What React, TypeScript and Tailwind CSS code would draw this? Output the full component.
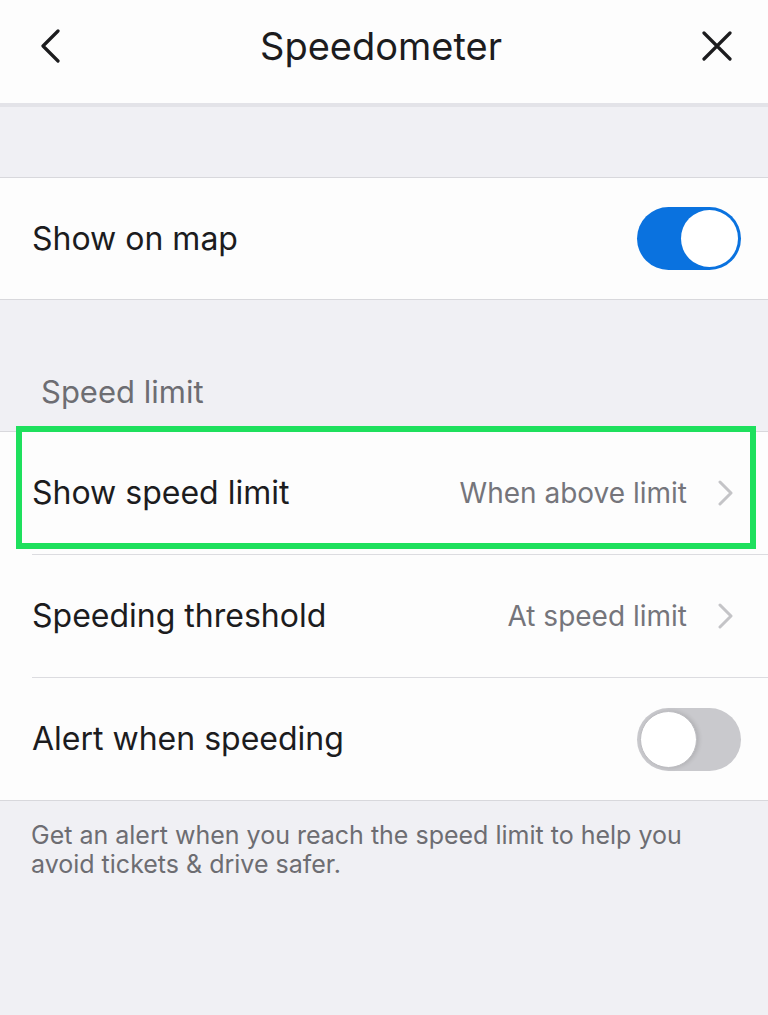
type Row = {
  label: string;
  value?: string;
  toggle?: boolean;
  highlighted?: boolean;
};

function BackIcon() {
  return (
    <svg width="20" height="34" viewBox="0 0 20 34" fill="none" className="text-[#1c1c1e]">
      <path d="M18 2 L3 17 L18 32" stroke="currentColor" strokeWidth="3.2" strokeLinecap="round" strokeLinejoin="round" />
    </svg>
  );
}

function CloseIcon() {
  return (
    <svg width="30" height="30" viewBox="0 0 30 30" fill="none" className="text-[#1c1c1e]">
      <path d="M2 2 L28 28 M28 2 L2 28" stroke="currentColor" strokeWidth="3.2" strokeLinecap="round" />
    </svg>
  );
}

function Chevron() {
  return (
    <svg width="16" height="26" viewBox="0 0 16 26" fill="none" className="text-[#c4c4c7]">
      <path d="M2 2 L13 13 L2 24" stroke="currentColor" strokeWidth="3" strokeLinecap="round" strokeLinejoin="round" />
    </svg>
  );
}

function Toggle({ on }: { on: boolean }) {
  return (
    <div
      className={
        on
          ? 'flex h-[63px] w-[104px] items-center justify-end rounded-full bg-[#0a72df] p-[3px]'
          : 'flex h-[63px] w-[104px] items-center justify-start rounded-full bg-[#c9c9cd] p-[3px]'
      }
    >
      <div
        className={
          on
            ? 'h-[57px] w-[57px] rounded-full bg-white'
            : 'h-[57px] w-[57px] rounded-full border border-[#bdbdc1] bg-white shadow-[2px_0_4px_rgba(0,0,0,0.12)]'
        }
      />
    </div>
  );
}

function SettingRow({ row, divider }: { row: Row; divider: boolean }) {
  return (
    <div className="relative bg-[#fdfdfd]">
      <div className="flex h-[122px] items-center pl-8 pr-[27px]">
        <span className="flex-1 text-[32px] text-[#1c1c1e]">{row.label}</span>
        {row.value && (
          <>
            <span className="mr-[31px] text-[28px] text-[#75757b]">{row.value}</span>
            <div className="mr-[7px]">
              <Chevron />
            </div>
          </>
        )}
        {row.toggle !== undefined && <Toggle on={row.toggle} />}
      </div>
      {divider && <div className="ml-8 h-px bg-[#dcdce0]" />}
      {row.highlighted && (
        <div className="pointer-events-none absolute left-4 top-[-6px] h-[123px] w-[740px] border-[6px] border-[#1ee05d]" />
      )}
    </div>
  );
}

export default function App() {
  const speedRows: Row[] = [
    { label: 'Show speed limit', value: 'When above limit', highlighted: true },
    { label: 'Speeding threshold', value: 'At speed limit' },
    { label: 'Alert when speeding', toggle: false },
  ];

  return (
    <div
      className="min-h-[1015px] bg-[#f0f0f4]"
      style={{ fontFamily: 'Inter, "Noto Sans", sans-serif' }}
    >
      <header className="flex h-[107px] items-center justify-between border-b-4 border-[#e3e3e8] bg-[#fdfdfd] pb-[11px] pl-[40px] pr-[36px]">
        <BackIcon />
        <h1 className="text-[38px] text-[#1c1c1e]">Speedometer</h1>
        <CloseIcon />
      </header>

      <div className="h-[70px]" />

      <section className="border-y border-[#d8d8dc] bg-[#fdfdfd]">
        <div className="flex h-[121px] items-center pl-8 pr-[27px]">
          <span className="flex-1 text-[32px] text-[#1c1c1e]">Show on map</span>
          <Toggle on />
        </div>
      </section>

      <div className="flex h-[131px] items-end pb-[16px] pl-[41px]">
        <span className="text-[31px] text-[#6d6d72]">Speed limit</span>
      </div>

      <section className="border-y border-[#d8d8dc]">
        {speedRows.map((row, i) => (
          <SettingRow key={row.label} row={row} divider={i < speedRows.length - 1} />
        ))}
      </section>

      <p className="px-[31px] pt-[20px] text-[25px] leading-[29px] text-[#6d6d72]">
        Get an alert when you reach the speed limit to help you avoid tickets &amp; drive safer.
      </p>
    </div>
  );
}
